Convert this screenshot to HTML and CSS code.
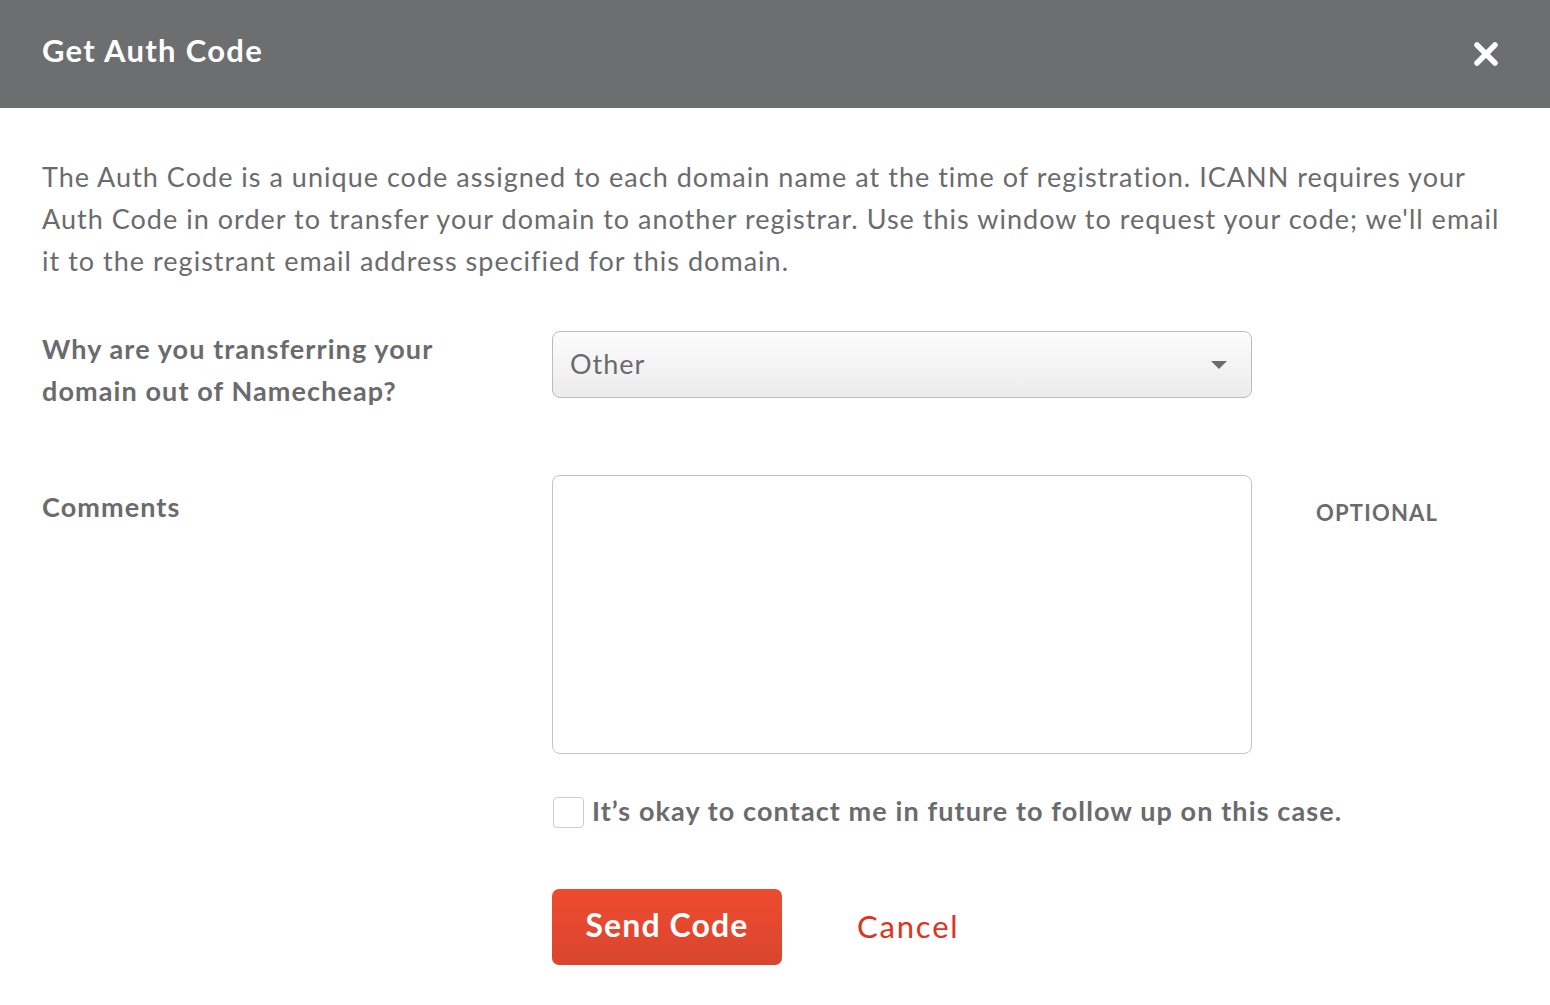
FILE: index.html
```html
<!DOCTYPE html>
<html lang="en">
<head>
<meta charset="utf-8">
<title>Get Auth Code</title>
<link rel="stylesheet" href="styles.css">
</head>
<body>
<div class="modal">
  <header class="modal-header">
    <h1 class="modal-title">Get Auth Code</h1>
    <button class="close-btn" aria-label="Close">
      <svg width="26" height="26" viewBox="0 0 26 26"><path d="M4 4 L22 22 M22 4 L4 22" stroke="#fff" stroke-width="5.5" stroke-linecap="round"/></svg>
    </button>
  </header>
  <div class="modal-body">
    <p class="intro">The Auth Code is a unique code assigned to each domain name at the time of registration. ICANN requires your Auth Code in order to transfer your domain to another registrar. Use this window to request your code; we'll email it to the registrant email address specified for this domain.</p>
    <div class="form-grid">
      <label class="field-label reason-label">Why are you transferring your domain out of Namecheap?</label>
      <div class="select-box">
        <span class="select-value">Other</span>
        <span class="select-arrow"></span>
      </div>
      <div></div>

      <label class="field-label comments-label">Comments</label>
      <div class="textarea-box"></div>
      <div class="optional">OPTIONAL</div>

      <div></div>
      <label class="check-row">
        <span class="checkbox"></span>
        <span class="check-text">It’s okay to contact me in future to follow up on this case.</span>
      </label>
      <div></div>

      <div></div>
      <div class="actions">
        <button class="send-btn">Send Code</button>
        <a class="cancel-link">Cancel</a>
      </div>
      <div></div>
    </div>
  </div>
</div>
</body>
</html>
```
FILE: styles.css
```css
* { box-sizing: border-box; }
html, body { margin: 0; padding: 0; background: #fff; }
body {
  font-family: "Lato", "Open Sans", sans-serif;
  color: #6a6b6d;
}
.modal { width: 1550px; }
.modal-header {
  height: 108px;
  background: #6d6e70;
  display: flex;
  align-items: center;
  justify-content: space-between;
  padding: 0 51px 8px 42px;
}
.modal-title {
  margin: 0;
  color: #fff;
  font-size: 31px;
  font-weight: 700;
  letter-spacing: 1.3px;
}
.close-btn {
  background: none;
  border: 0;
  padding: 0;
  margin-top: 8px;
  display: flex;
}
.modal-body { padding: 48px 42px 0 42px; }
.intro {
  margin: 0;
  font-size: 27px;
  line-height: 42px;
  font-weight: 400;
  color: #6a6b6d;
  letter-spacing: 1.02px;
}
.form-grid {
  display: grid;
  grid-template-columns: 510px 700px auto;
  margin-top: 46px;
}
.field-label {
  font-size: 27px;
  line-height: 42px;
  font-weight: 700;
  color: #6a6b6d;
  letter-spacing: 1.1px;
}
.reason-label { padding-right: 40px; }
.select-box {
  margin-top: 3px;
  height: 67px;
  border: 1px solid #bcbcbc;
  border-radius: 8px;
  background: linear-gradient(#fcfcfc, #ececec);
  display: flex;
  align-items: center;
  justify-content: space-between;
  padding: 0 24px 0 17px;
}
.select-value { font-size: 27px; color: #6a6b6d; letter-spacing: 1px; margin-top: -3px; }
.select-arrow {
  width: 0; height: 0;
  border-left: 8px solid transparent;
  border-right: 8px solid transparent;
  border-top: 8px solid #6a6b6d;
}
.comments-label { margin-top: 63px; padding-top: 11px; }
.textarea-box {
  margin-top: 63px;
  height: 279px;
  border: 1px solid #c4c4c4;
  border-radius: 8px;
  background: #fff;
}
.optional {
  margin-top: 63px;
  padding: 24px 0 0 64px;
  font-size: 22px;
  font-weight: 700;
  line-height: 28px;
  letter-spacing: 1.2px;
  color: #6a6b6d;
}
.check-row {
  margin-top: 43px;
  display: flex;
  align-items: center;
  gap: 8px;
  white-space: nowrap;
}
.checkbox {
  width: 31px; height: 31px;
  margin-left: 1px;
  border: 1px solid #cfcfcf;
  border-radius: 4px;
  background: #fff;
  flex: none;
}
.check-text {
  font-size: 27px;
  font-weight: 700;
  color: #6a6b6d;
  letter-spacing: 1.1px;
  margin-top: -5px;
}
.actions {
  margin-top: 61px;
  display: flex;
  align-items: center;
  gap: 75px;
}
.send-btn {
  width: 230px;
  height: 76px;
  border: 0;
  border-radius: 7px;
  background: linear-gradient(#ee4b2e, #d9452f);
  color: #fff;
  font-family: inherit;
  font-size: 32px;
  font-weight: 700;
  letter-spacing: 1.1px;
  padding: 0 0 6px 0;
}
.cancel-link {
  font-size: 31px;
  color: #e2321d;
  letter-spacing: 1.8px;
  margin-top: -2px;
}
```
